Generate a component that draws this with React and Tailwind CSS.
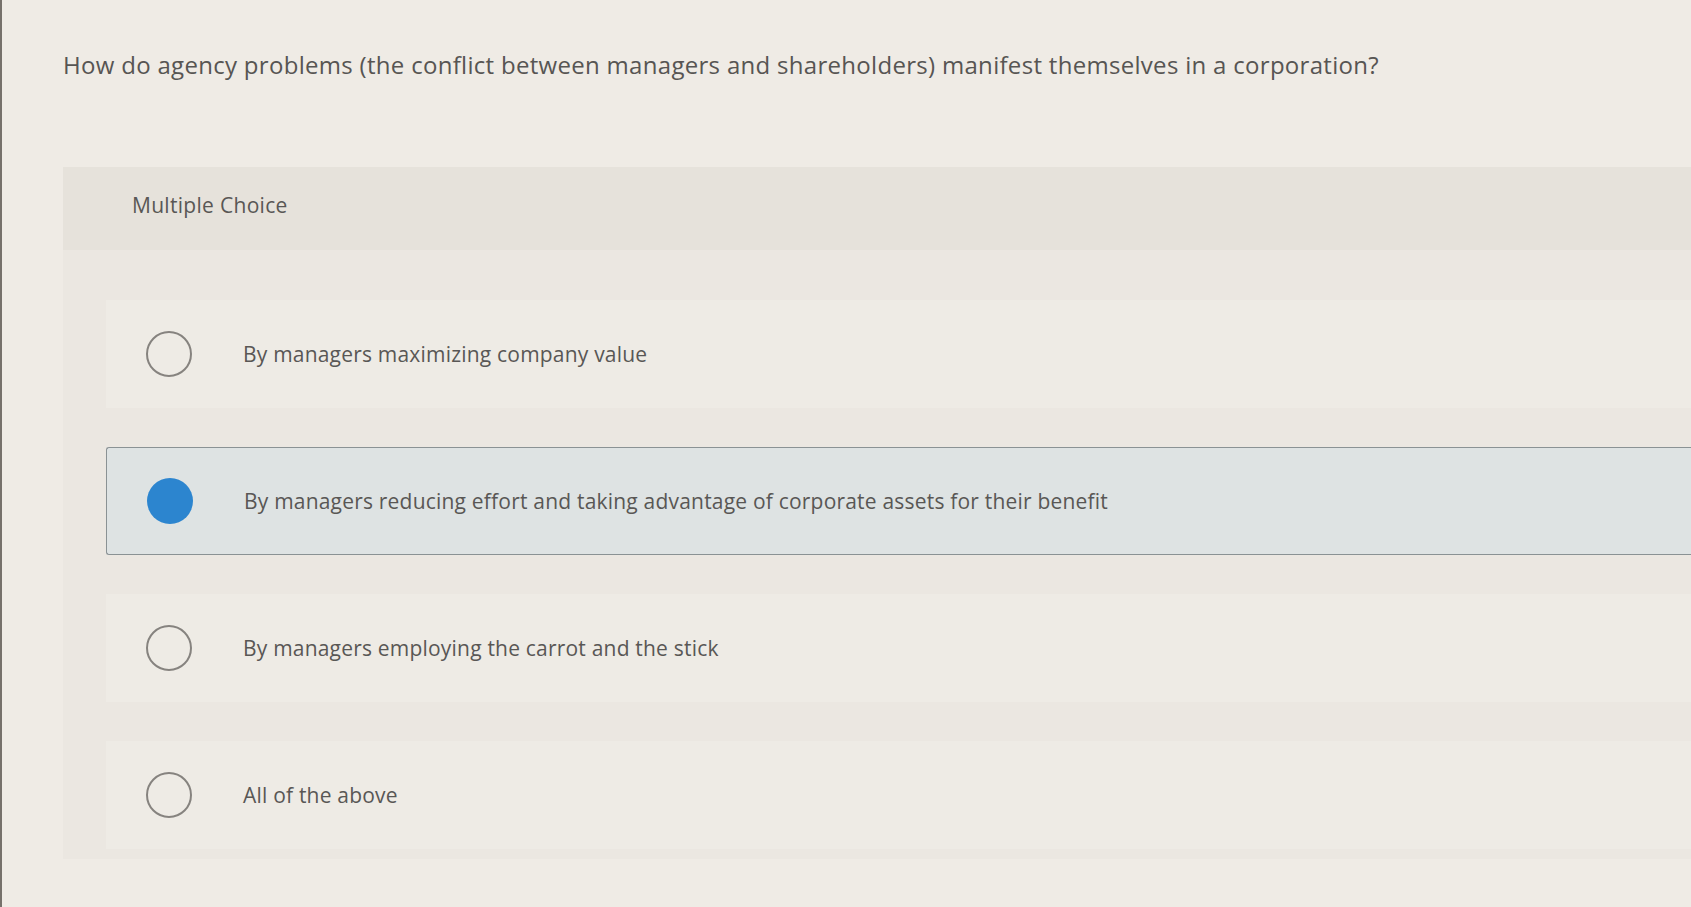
import React from "react";

const options = [
  "By managers maximizing company value",
  "By managers reducing effort and taking advantage of corporate assets for their benefit",
  "By managers employing the carrot and the stick",
  "All of the above",
];

export default function App() {
  const selected = 1;
  return (
    <div
      className="w-full h-[907px] overflow-hidden bg-[#efebe5] border-l-2 border-[#76716b] text-[#585654]"
      style={{ fontFamily: "'Open Sans', Lato, sans-serif" }}
    >
      <div className="pt-[50px] pl-[61px] text-[24px] leading-[30px] tracking-[0.3px] text-[#575553]">
        How do agency problems (the conflict between managers and shareholders) manifest themselves in a corporation?
      </div>
      <div className="mt-[87px] ml-[61px] bg-[#ebe7e1] pb-[10px]">
        <div className="h-[83px] pl-[69px] pt-[24px] bg-[#e6e2db] text-[21px] leading-[28px] tracking-[0.3px] text-[#595755]">
          Multiple Choice
        </div>
        <div className="pt-[50px] pl-[43px] flex flex-col gap-[39px]">
          {options.map((o, i) => (
            <div
              key={i}
              className={
                i === selected
                  ? "h-[108px] flex items-center bg-[#dee3e3] border border-r-0 border-[#8a9294] rounded-l-[3px]"
                  : "h-[108px] flex items-center bg-[#eeebe5]"
              }
            >
              <div className="w-[40px] shrink-0" />
              {i === selected ? (
                <div className="w-[46px] h-[46px] rounded-full bg-[#2c85cf] shrink-0" />
              ) : (
                <div className="w-[46px] h-[46px] rounded-full border-2 border-[#86837f] shrink-0" />
              )}
              <div className="pl-[51px] text-[21px] leading-[28px] tracking-[0.2px] text-[#595755]">{o}</div>
            </div>
          ))}
        </div>
      </div>
    </div>
  );
}
